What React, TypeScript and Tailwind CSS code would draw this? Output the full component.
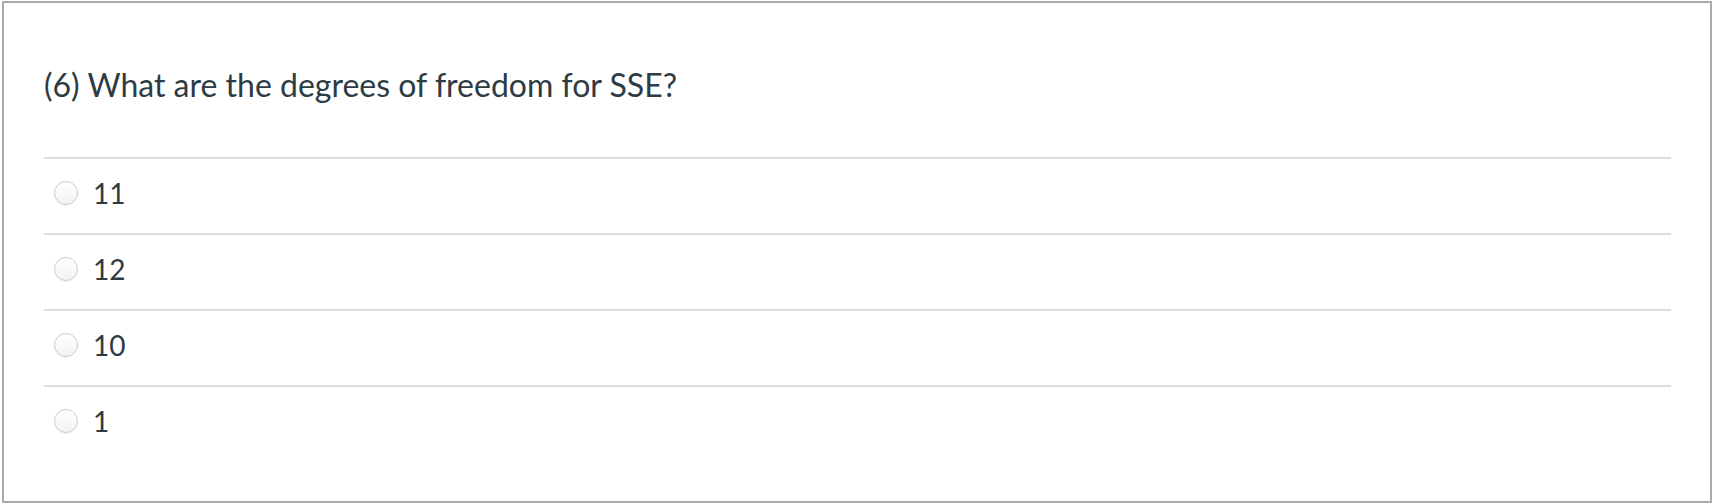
import React from 'react';

const answers = ['11', '12', '10', '1'];

export default function App() {
  return (
    <div className="w-[1718px] h-[504px] bg-white pt-px pl-[2px]">
      <div
        className="w-[1710px] h-[502px] border-2 border-[#aaaaaa] pt-[63px] pl-[40px] pr-[39px] pb-[40px] text-[#2d3b45]"
        style={{ fontFamily: 'Lato, "Noto Sans", sans-serif' }}
      >
        {/* Question */}
        <div className="text-[32px] leading-[38px] mb-[53px]">
          (6) What are the degrees of freedom for SSE?
        </div>

        {/* Answers */}
        <div className="flex flex-col">
          {answers.map((a) => (
            <label key={a} className="flex items-center h-[76px] border-t-2 border-[#dddddd] pl-[10px] pb-[6px] gap-[15px]">
              <span className="w-[24px] h-[24px] rounded-full border border-[#cccccc] bg-gradient-to-b from-white to-[#f3f3f3] shadow-[0_1px_1px_rgba(0,0,0,0.05)] shrink-0" />
              <span className="text-[28px] leading-[34px]">{a}</span>
            </label>
          ))}
        </div>
      </div>
    </div>
  );
}
